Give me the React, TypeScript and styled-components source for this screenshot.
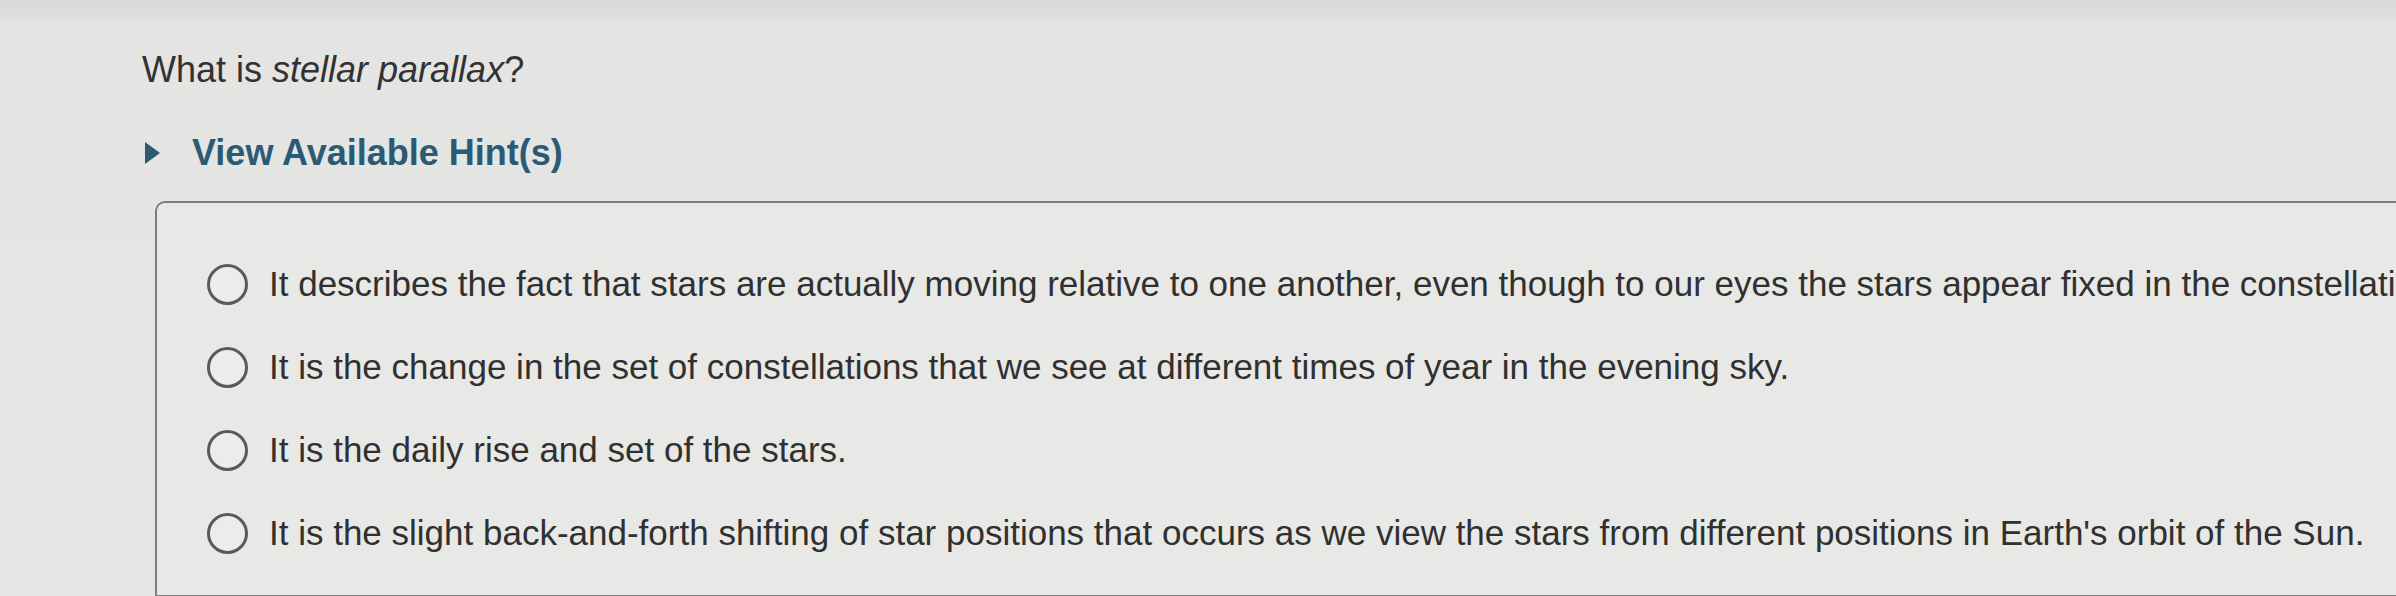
import React from "react";
import styled, { createGlobalStyle } from "styled-components";

const Global = createGlobalStyle`
  html, body { margin: 0; padding: 0; }
  body {
    width: 2396px;
    height: 596px;
    overflow: hidden;
    background: #e3e3e1;
    font-family: "Liberation Sans", Arial, sans-serif;
  }
`;

const Page = styled.div`
  position: relative;
  width: 2396px;
  height: 596px;
  box-sizing: border-box;
  overflow: hidden;
  padding: 50px 0 0 142px;
  background: linear-gradient(180deg, #d9d9d7 0px, #dcdcda 16px, #e4e4e2 22px, #e6e6e4 100%);
`;

const Question = styled.div`
  font-size: 36px;
  line-height: 40px;
  color: #323232;
  white-space: nowrap;
  em { font-style: italic; }
`;

const HintToggle = styled.div`
  display: flex;
  align-items: center;
  gap: 32px;
  margin-top: 43px;
  height: 39px;
  color: #2b5a74;
  font-size: 36px;
  font-weight: bold;
  white-space: nowrap;
`;

const Triangle = styled.span`
  width: 0;
  height: 0;
  margin-left: 3px;
  border-top: 11px solid transparent;
  border-bottom: 11px solid transparent;
  border-left: 15px solid #2b5a74;
`;

const AnswerBox = styled.div`
  margin-top: 29px;
  margin-left: 13px;
  width: 2400px;
  height: 396px;
  box-sizing: border-box;
  border: 2px solid #7d7d7d;
  border-right: none;
  border-top-left-radius: 10px;
  background: #e8e8e6;
  padding: 59px 0 0 50px;
  display: flex;
  flex-direction: column;
  gap: 39px;
`;

const Option = styled.label`
  display: flex;
  align-items: center;
  gap: 21px;
  height: 44px;
  font-size: 35px;
  color: #303030;
  white-space: nowrap;
`;

const Radio = styled.span`
  flex: 0 0 auto;
  width: 41px;
  height: 41px;
  box-sizing: border-box;
  border: 3px solid #5a5a5a;
  border-radius: 50%;
  background: #ececea;
`;

const options = [
  "It describes the fact that stars are actually moving relative to one another, even though to our eyes the stars appear fixed in the constellations.",
  "It is the change in the set of constellations that we see at different times of year in the evening sky.",
  "It is the daily rise and set of the stars.",
  "It is the slight back-and-forth shifting of star positions that occurs as we view the stars from different positions in Earth's orbit of the Sun.",
];

export default function App() {
  return (
    <>
      <Global />
      <Page>
        <Question>
          What is <em>stellar parallax</em>?
        </Question>
        <HintToggle>
          <Triangle />
          <span>View Available Hint(s)</span>
        </HintToggle>
        <AnswerBox>
          {options.map((o) => (
            <Option key={o}>
              <Radio />
              <span>{o}</span>
            </Option>
          ))}
        </AnswerBox>
      </Page>
    </>
  );
}
